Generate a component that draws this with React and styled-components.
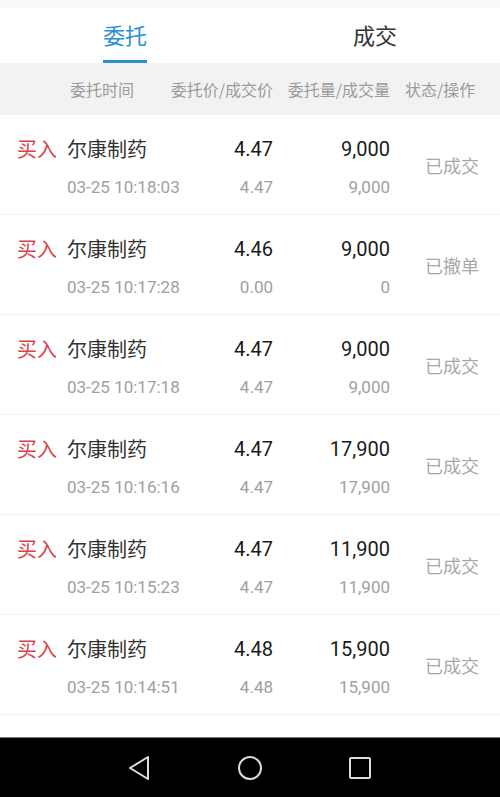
import styled, { createGlobalStyle } from "styled-components"

const GlobalStyle = createGlobalStyle`
  html, body {
    margin: 0;
    padding: 0;
    background: #fff;
    font-family: Roboto, "Noto Sans CJK SC", sans-serif;
  }
`

const orders = [
  { time: "03-25 10:18:03", price: "4.47", dealPrice: "4.47", qty: "9,000", dealQty: "9,000", status: "已成交" },
  { time: "03-25 10:17:28", price: "4.46", dealPrice: "0.00", qty: "9,000", dealQty: "0", status: "已撤单" },
  { time: "03-25 10:17:18", price: "4.47", dealPrice: "4.47", qty: "9,000", dealQty: "9,000", status: "已成交" },
  { time: "03-25 10:16:16", price: "4.47", dealPrice: "4.47", qty: "17,900", dealQty: "17,900", status: "已成交" },
  { time: "03-25 10:15:23", price: "4.47", dealPrice: "4.47", qty: "11,900", dealQty: "11,900", status: "已成交" },
  { time: "03-25 10:14:51", price: "4.48", dealPrice: "4.48", qty: "15,900", dealQty: "15,900", status: "已成交" },
]

const Screen = styled.div`
  width: 500px;
  height: 797px;
  display: flex;
  flex-direction: column;
  overflow: hidden;
`
const StatusStrip = styled.div`
  height: 8px;
  background: #f9f9f9;
`
const Tabs = styled.div`
  height: 55px;
  display: flex;
`
const Tab = styled.div`
  flex: 1;
  display: flex;
  justify-content: center;
`
const TabLabel = styled.div`
  font-family: "Noto Sans CJK SC", sans-serif;
  font-size: 22px;
  line-height: 22px;
  padding-top: 15px;
  height: 55px;
  box-sizing: border-box;
  color: ${(p) => (p.active ? "#2b8fd2" : "#333")};
  border-bottom: 3px solid ${(p) => (p.active ? "#2b8fd2" : "transparent")};
`
const Grid = styled.div`
  display: grid;
  grid-template-columns: 50px 126px 80px 117px 1fr;
  padding-left: 17px;
`
const Header = styled(Grid)`
  height: 52px;
  background: #f2f2f2;
  align-items: center;
  font-family: "Noto Sans CJK SC", sans-serif;
  font-size: 16px;
  color: #9b9b9b;
`
const HeadCell = styled.div`
  display: flex;
  justify-content: ${(p) => (p.right ? "flex-end" : "flex-start")};
  padding-left: ${(p) => p.pad || 0}px;
  white-space: nowrap;
`
const Row = styled(Grid)`
  height: 100px;
  box-sizing: border-box;
  border-bottom: 1px solid #efefef;
  grid-template-rows: 34px 42px 1fr;
  padding-top: 17px;
`
const Side = styled.div`
  font-family: "Noto Sans CJK SC", sans-serif;
  font-size: 20px;
  line-height: 34px;
  color: #d9434c;
`
const Name = styled.div`
  font-family: "Noto Sans CJK SC", sans-serif;
  font-size: 20px;
  line-height: 34px;
  color: #333;
`
const Main = styled.div`
  font-size: 20px;
  font-weight: 400;
  line-height: 34px;
  color: #1a1a1a;
  text-align: right;
`
const Sub = styled.div`
  grid-column: ${(p) => p.col || "auto"};
  font-size: 17px;
  line-height: 42px;
  color: #a0a0a0;
  text-align: ${(p) => p.align || "right"};
  white-space: nowrap;
`
const Status = styled.div`
  grid-column: 5;
  grid-row: 1 / 3;
  align-self: center;
  padding: 0 0 11px 35px;
  font-family: "Noto Sans CJK SC", sans-serif;
  font-size: 18px;
  color: #a8a8a8;
`
const Spacer = styled.div`
  flex: 1;
`
const NavBar = styled.div`
  height: 59px;
  background: #000;
  border-top: 1px solid #777;
  display: flex;
  align-items: center;
  justify-content: center;
  gap: 80px;
`

const NavIcon = ({ children }) => (
  <svg width="30" height="30" viewBox="0 0 30 30" fill="none" stroke="#ddd" strokeWidth="2" strokeLinejoin="round">
    {children}
  </svg>
)

const App = () => {
  return (
    <Screen>
      <GlobalStyle />
      <StatusStrip />
      <Tabs>
        <Tab><TabLabel active>委托</TabLabel></Tab>
        <Tab><TabLabel>成交</TabLabel></Tab>
      </Tabs>
      <Header>
        <div />
        <HeadCell pad={3}>委托时间</HeadCell>
        <HeadCell right>委托价/成交价</HeadCell>
        <HeadCell right>委托量/成交量</HeadCell>
        <HeadCell pad={15}>状态/操作</HeadCell>
      </Header>
      {orders.map((o, i) => (
        <Row key={i}>
          <Side>买入</Side>
          <Name>尔康制药</Name>
          <Main>{o.price}</Main>
          <Main>{o.qty}</Main>
          <Status>{o.status}</Status>
          <Sub col="2" align="left">{o.time}</Sub>
          <Sub col="3">{o.dealPrice}</Sub>
          <Sub col="4">{o.dealQty}</Sub>
        </Row>
      ))}
      <Spacer />
      <NavBar>
        <NavIcon><path d="M23 4 L5 15 L23 26 Z" /></NavIcon>
        <NavIcon><circle cx="15" cy="15" r="11" /></NavIcon>
        <NavIcon><rect x="5" y="5" width="20" height="20" rx="1" /></NavIcon>
      </NavBar>
    </Screen>
  )
}

export default App
